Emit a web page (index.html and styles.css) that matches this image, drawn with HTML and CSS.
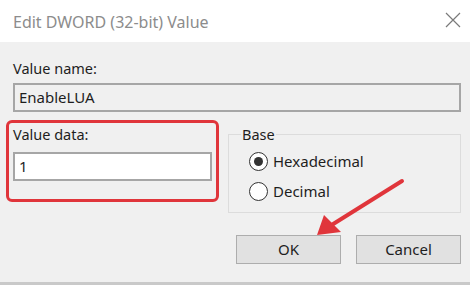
FILE: index.html
```html
<!DOCTYPE html>
<html lang="en">
  <head>
    <meta charset="UTF-8" />
    <title>Edit DWORD (32-bit) Value</title>
    <link rel="stylesheet" href="styles.css">
  </head>
  <body>
    <div class="dialog">
      <div class="titlebar">
        <span class="title">Edit DWORD (32-bit) Value</span>
        <svg class="close" width="16" height="16" viewBox="0 0 16 16">
          <path d="M1 1 L15 15 M15 1 L1 15" stroke="#7a7a7a" stroke-width="1.2" fill="none" />
        </svg>
      </div>

      <div class="content">
        <div class="label">Value name:</div>
        <div class="field readonly">EnableLUA</div>

        <div class="row">
          <div class="data-col">
            <div class="label">Value data:</div>
            <div class="field">1</div>
          </div>

          <fieldset class="base">
            <legend>Base</legend>
            <div class="radio">
              <span class="dot checked"></span>
              <span>Hexadecimal</span>
            </div>
            <div class="radio">
              <span class="dot"></span>
              <span>Decimal</span>
            </div>
          </fieldset>
        </div>

        <div class="buttons">
          <div class="btn">OK</div>
          <div class="btn">Cancel</div>
        </div>
      </div>
      <div class="strip"></div>

      <!-- annotation arrow -->
      <svg class="arrow" width="474" height="285" viewBox="0 0 474 285">
        <line x1="402" y1="181" x2="330" y2="226" stroke="#e0353b" stroke-width="4" stroke-linecap="round" />
        <polygon points="317,235 324,215 341,232" fill="#e0353b" />
      </svg>
    </div>
  </body>
</html>
```

FILE: styles.css
```css
body {
  margin: 0;
  background-color: #fff;
  font-family: "Noto Sans", "Open Sans", sans-serif;
  color: #1e1e1e;
}

.dialog {
  width: 470px;
  height: 285px;
  display: flex;
  flex-direction: column;
  overflow: hidden;
}

.titlebar {
  height: 42px;
  flex-shrink: 0;
  background-color: #fff;
  display: flex;
  align-items: center;
  justify-content: space-between;
  padding: 0 9px 0 13px;
}

.title {
  font-size: 16px;
  color: #8c8c8c;
  margin-top: 1px;
}

.close {
  margin-top: -2px;
}

.content {
  flex: 1;
  background-color: #f0f0f0;
  padding: 16px 9px 0 13px;
}

.label {
  font-size: 14.5px;
  line-height: 20px;
  height: 21px;
}

.field {
  height: 25px;
  border: 2px solid #a6a6a6;
  background-color: #fff;
  font-size: 15px;
  line-height: 25px;
  padding-left: 4px;
}

.readonly {
  margin-top: 4px;
  background-color: #f0f0f0;
}

.row {
  display: flex;
  align-items: flex-start;
  margin-top: 8px;
}

.data-col {
  flex-shrink: 0;
  width: 199px;
  margin-left: -7px;
  border: 3px solid #e0353b;
  border-radius: 6px;
  padding: 1px 4px 18px 4px;
}

.data-col .field {
  margin-top: 7px;
}

.base {
  flex-shrink: 0;
  width: 211px;
  margin: 4px 0 0 9px;
  padding: 2px 0 6px 20px;
  border: 1px solid #dcdcdc;
  min-width: 0;
}

.base legend {
  font-size: 14.5px;
  line-height: 20px;
  padding: 0 1px;
  margin-left: -8px;
}

.radio {
  display: flex;
  align-items: center;
  gap: 5px;
  font-size: 15px;
  height: 30px;
}

.dot {
  width: 17px;
  height: 17px;
  border: 1px solid #333;
  border-radius: 50%;
  background-color: #fff;
  display: flex;
  align-items: center;
  justify-content: center;
}

.dot.checked::after {
  content: "";
  width: 9px;
  height: 9px;
  border-radius: 50%;
  background-color: #333;
}

.buttons {
  display: flex;
  justify-content: flex-end;
  gap: 15px;
  margin-top: 22px;
}

.btn {
  width: 103px;
  height: 27px;
  border: 1px solid #adadad;
  background-color: #e1e1e1;
  font-size: 15px;
  line-height: 27px;
  text-align: center;
}

.strip {
  height: 3px;
  flex-shrink: 0;
  background-color: #c9c9c9;
}

.arrow {
  position: absolute;
  left: 0;
  top: 0;
  pointer-events: none;
}
```
